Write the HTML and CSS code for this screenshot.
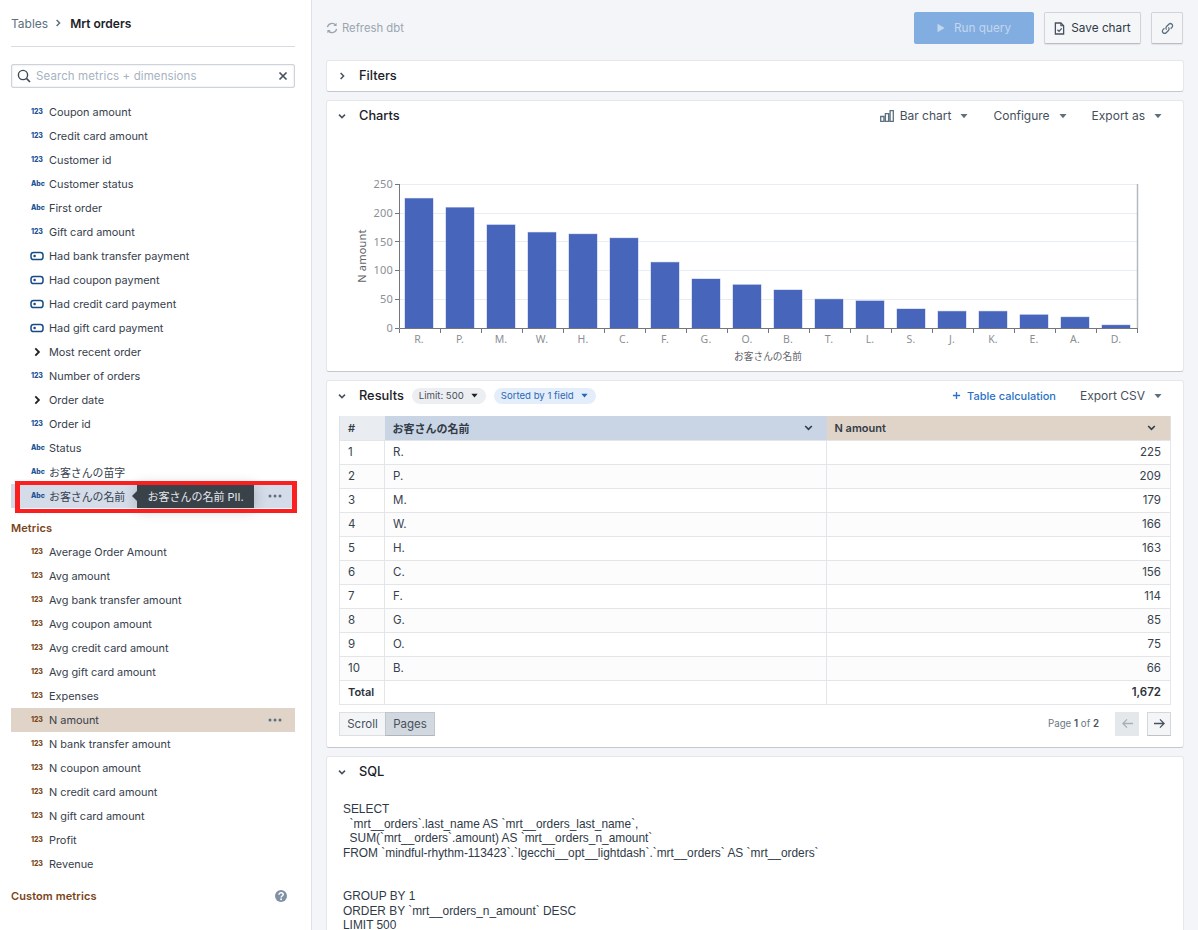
FILE: index.html
```html
<!DOCTYPE html>
<html lang="en">
<head>
<meta charset="utf-8">
<title>Mrt orders</title>
<link rel="stylesheet" href="styles.css">
</head>
<body>
<svg class="defs" width="0" height="0" aria-hidden="true">
  <symbol id="bool" viewBox="0 0 14 10"><rect x="1" y="1.500" width="12" height="7" rx="2.600" fill="none" stroke="currentColor" stroke-width="1.500"/><circle cx="4.600" cy="5" r="1.300" fill="currentColor"/></symbol>
  <symbol id="more" viewBox="0 0 14 4"><circle cx="2" cy="2" r="1.500" fill="currentColor"/><circle cx="7" cy="2" r="1.500" fill="currentColor"/><circle cx="12" cy="2" r="1.500" fill="currentColor"/></symbol>
  <symbol id="chev-d" viewBox="0 0 10 10"><path d="M2 3.600 5 6.600 8 3.600" fill="none" stroke="currentColor" stroke-width="1.500"/></symbol>
  <symbol id="chev-r" viewBox="0 0 10 10"><path d="M3.600 2 6.600 5 3.600 8" fill="none" stroke="currentColor" stroke-width="1.500"/></symbol>
  <symbol id="caret" viewBox="0 0 10 10"><path d="M1.500 3h7L5 7.200z" fill="currentColor"/></symbol>
</svg>

<div class="app">
  <aside class="sidebar">
    <div class="crumbs">
      <span class="crumb-link">Tables</span>
      <svg class="crumb-sep"><use href="#chev-r"/></svg>
      <span class="crumb-current">Mrt orders</span>
    </div>
    <div class="search">
      <svg class="search-icon" viewBox="0 0 14 14"><circle cx="6" cy="6" r="4.600" fill="none" stroke="currentColor" stroke-width="1.400"/><path d="M9.400 9.400 13 13" stroke="currentColor" stroke-width="1.600" fill="none"/></svg>
      <span class="search-text">Search metrics + dimensions</span>
      <svg class="search-clear" viewBox="0 0 10 10"><path d="M1.500 1.500 8.500 8.500M8.500 1.500 1.500 8.500" stroke="currentColor" stroke-width="1.700" fill="none"/></svg>
    </div>

    <ul class="fields dims">
      <li class="field"><span class="ftype">123</span>Coupon amount</li>
      <li class="field"><span class="ftype">123</span>Credit card amount</li>
      <li class="field"><span class="ftype">123</span>Customer id</li>
      <li class="field"><span class="ftype">Abc</span>Customer status</li>
      <li class="field"><span class="ftype">Abc</span>First order</li>
      <li class="field"><span class="ftype">123</span>Gift card amount</li>
      <li class="field"><svg class="fbool"><use href="#bool"/></svg>Had bank transfer payment</li>
      <li class="field"><svg class="fbool"><use href="#bool"/></svg>Had coupon payment</li>
      <li class="field"><svg class="fbool"><use href="#bool"/></svg>Had credit card payment</li>
      <li class="field"><svg class="fbool"><use href="#bool"/></svg>Had gift card payment</li>
      <li class="field"><svg class="ftree"><use href="#chev-r"/></svg>Most recent order</li>
      <li class="field"><span class="ftype">123</span>Number of orders</li>
      <li class="field"><svg class="ftree"><use href="#chev-r"/></svg>Order date</li>
      <li class="field"><span class="ftype">123</span>Order id</li>
      <li class="field"><span class="ftype">Abc</span>Status</li>
      <li class="field"><span class="ftype">Abc</span>お客さんの苗字</li>
      <li class="field hovered"><span class="ftype">Abc</span>お客さんの名前
        <svg class="more"><use href="#more"/></svg>
        <div class="tooltip">お客さんの名前 PII.</div>
        <div class="highlight"></div>
      </li>
    </ul>

    <h3 class="group">Metrics</h3>
    <ul class="fields metrics">
      <li class="field"><span class="ftype">123</span>Average Order Amount</li>
      <li class="field"><span class="ftype">123</span>Avg amount</li>
      <li class="field"><span class="ftype">123</span>Avg bank transfer amount</li>
      <li class="field"><span class="ftype">123</span>Avg coupon amount</li>
      <li class="field"><span class="ftype">123</span>Avg credit card amount</li>
      <li class="field"><span class="ftype">123</span>Avg gift card amount</li>
      <li class="field"><span class="ftype">123</span>Expenses</li>
      <li class="field selected"><span class="ftype">123</span>N amount<svg class="more"><use href="#more"/></svg></li>
      <li class="field"><span class="ftype">123</span>N bank transfer amount</li>
      <li class="field"><span class="ftype">123</span>N coupon amount</li>
      <li class="field"><span class="ftype">123</span>N credit card amount</li>
      <li class="field"><span class="ftype">123</span>N gift card amount</li>
      <li class="field"><span class="ftype">123</span>Profit</li>
      <li class="field"><span class="ftype">123</span>Revenue</li>
    </ul>
    <h3 class="group custom">Custom metrics
      <svg class="help" viewBox="0 0 12 12"><circle cx="6" cy="6" r="6" fill="currentColor"/><path d="M4 4.700C4 2 8.200 2.200 8.200 4.600 8.200 6 6.100 6 6.100 7.400" fill="none" stroke="#fff" stroke-width="1.500"/><circle cx="6.100" cy="9.300" r=".95" fill="#fff"/></svg>
    </h3>
  </aside>

  <main class="main">
    <div class="toolbar">
      <span class="refresh">
        <svg class="refresh-icon" viewBox="0 0 12 12"><path d="M1.400 5.200A4.700 4.700 0 0 1 9.600 3M10.600 6.800A4.700 4.700 0 0 1 2.400 9" fill="none" stroke="currentColor" stroke-width="1.300"/><path d="M10.600 .8v3.200H7.400zM1.400 11.200V8h3.200z" fill="currentColor"/></svg>
        Refresh dbt
      </span>
      <div class="actions">
        <button class="btn-run"><svg class="run-icon" viewBox="0 0 8 10"><path d="M.5 .8 7.600 5 .5 9.200z" fill="currentColor"/></svg>Run query</button>
        <button class="btn"><svg class="save-icon" viewBox="0 0 12 14"><path d="M1.500 1h6l3 3v9h-9z" fill="none" stroke="currentColor" stroke-width="1.400"/><path d="M7.500 1v3h3" fill="none" stroke="currentColor" stroke-width="1.200"/><path d="M3.800 8.400 5.500 10.200 8.400 6.800" fill="none" stroke="currentColor" stroke-width="1.300"/></svg>Save chart</button>
        <button class="btn btn-icon"><svg class="link-icon" viewBox="0 0 14 14"><path d="M6 8.200a2.400 2.400 0 0 1 0-3.400L8.400 2.400a2.400 2.400 0 0 1 3.400 3.400L10.400 7.200M8 5.800a2.400 2.400 0 0 1 0 3.400L5.600 11.600a2.400 2.400 0 0 1-3.400-3.400L3.600 6.800" fill="none" stroke="currentColor" stroke-width="1.400"/></svg></button>
      </div>
    </div>

    <section class="card card-filters">
      <header class="card-head">
        <svg class="toggle"><use href="#chev-r"/></svg>
        <h2>Filters</h2>
      </header>
    </section>

    <section class="card card-charts">
      <header class="card-head">
        <svg class="toggle"><use href="#chev-d"/></svg>
        <h2>Charts</h2>
        <div class="head-actions">
          <span class="menu"><svg class="bar-icon" viewBox="0 0 14 12"><path d="M.7 6.500h3.200v4.800H.7zM5.400 3.600h3.200v7.700H5.400zM10.100 .7h3.200v10.600h-3.200z" fill="none" stroke="currentColor" stroke-width="1.300"/></svg>Bar chart<svg class="caret"><use href="#caret"/></svg></span>
          <span class="menu">Configure<svg class="caret"><use href="#caret"/></svg></span>
          <span class="menu">Export as<svg class="caret"><use href="#caret"/></svg></span>
        </div>
      </header>
      <svg class="chart" viewBox="0 0 856 240" width="856" height="240">
        <g class="grid">
          <path d="M72 53.500H811M72 82.500H811M72 110.500H811M72 139.500H811M72 168.500H811"/>
          <path class="grid-end" d="M810.500 53V197"/>
        </g>
        <g class="bars">
          <rect x="78" y="67.400" width="28" height="129.600"/>
          <rect x="119" y="76.600" width="28" height="120.400"/>
          <rect x="160" y="93.900" width="28" height="103.100"/>
          <rect x="201" y="101.400" width="28" height="95.600"/>
          <rect x="242" y="103.100" width="28" height="93.900"/>
          <rect x="283" y="107.100" width="28" height="89.900"/>
          <rect x="324" y="131.300" width="28" height="65.700"/>
          <rect x="365" y="148" width="28" height="49"/>
          <rect x="406" y="153.800" width="28" height="43.200"/>
          <rect x="447" y="159" width="28" height="38"/>
          <rect x="488" y="168.200" width="28" height="28.800"/>
          <rect x="529" y="169.900" width="28" height="27.100"/>
          <rect x="570" y="178" width="28" height="19"/>
          <rect x="611" y="180.300" width="28" height="16.700"/>
          <rect x="652" y="180.300" width="28" height="16.700"/>
          <rect x="693" y="183.800" width="28" height="13.200"/>
          <rect x="734" y="186.100" width="28" height="10.900"/>
          <rect x="775" y="194.100" width="28" height="2.900"/>
        </g>
        <path class="axis" d="M72.500 53V197.500H811M68 53.500h4M68 82.500h4M68 110.500h4M68 139.500h4M68 168.500h4M68 197.500h4M72.500 198v4M113.500 198v4M154.500 198v4M195.500 198v4M236.500 198v4M277.500 198v4M318.500 198v4M359.500 198v4M400.500 198v4M441.500 198v4M482.500 198v4M523.500 198v4M564.500 198v4M605.500 198v4M646.500 198v4M687.500 198v4M728.500 198v4M769.500 198v4M810.500 198v4"/>
        <g class="ylabels">
          <text x="66" y="57">250</text>
          <text x="66" y="86">200</text>
          <text x="66" y="114.500">150</text>
          <text x="66" y="143">100</text>
          <text x="66" y="172">50</text>
          <text x="66" y="201">0</text>
        </g>
        <g class="xlabels">
          <text x="92" y="212">R.</text>
          <text x="133" y="212">P.</text>
          <text x="174" y="212">M.</text>
          <text x="215" y="212">W.</text>
          <text x="256" y="212">H.</text>
          <text x="297" y="212">C.</text>
          <text x="338" y="212">F.</text>
          <text x="379" y="212">G.</text>
          <text x="420" y="212">O.</text>
          <text x="461" y="212">B.</text>
          <text x="502" y="212">T.</text>
          <text x="543" y="212">L.</text>
          <text x="584" y="212">S.</text>
          <text x="625" y="212">J.</text>
          <text x="666" y="212">K.</text>
          <text x="707" y="212">E.</text>
          <text x="748" y="212">A.</text>
          <text x="789" y="212">D.</text>
        </g>
        <text class="xtitle" x="441" y="229">お客さんの名前</text>
        <text class="ytitle" transform="translate(39 125) rotate(-90)">N amount</text>
      </svg>
    </section>

    <section class="card card-results">
      <header class="card-head">
        <svg class="toggle"><use href="#chev-d"/></svg>
        <h2>Results</h2>
        <span class="tag">Limit: 500<svg class="tag-caret"><use href="#caret"/></svg></span>
        <span class="tag tag-blue">Sorted by 1 field<svg class="tag-caret"><use href="#caret"/></svg></span>
        <div class="head-actions">
          <span class="menu menu-blue"><svg class="plus" viewBox="0 0 10 10"><path d="M5 1v8M1 5h8" stroke="currentColor" stroke-width="1.500" fill="none"/></svg>Table calculation</span>
          <span class="menu">Export CSV<svg class="caret"><use href="#caret"/></svg></span>
        </div>
      </header>
      <div class="table-wrap">
        <table class="results">
          <thead>
            <tr>
              <th class="col-idx">#</th>
              <th class="col-dim"><span class="th-in">お客さんの名前<svg class="th-chev"><use href="#chev-d"/></svg></span></th>
              <th class="col-metric"><span class="th-in">N amount<svg class="th-chev"><use href="#chev-d"/></svg></span></th>
            </tr>
          </thead>
          <tbody>
            <tr><td>1</td><td>R.</td><td class="num">225</td></tr>
            <tr><td>2</td><td>P.</td><td class="num">209</td></tr>
            <tr><td>3</td><td>M.</td><td class="num">179</td></tr>
            <tr><td>4</td><td>W.</td><td class="num">166</td></tr>
            <tr><td>5</td><td>H.</td><td class="num">163</td></tr>
            <tr><td>6</td><td>C.</td><td class="num">156</td></tr>
            <tr><td>7</td><td>F.</td><td class="num">114</td></tr>
            <tr><td>8</td><td>G.</td><td class="num">85</td></tr>
            <tr><td>9</td><td>O.</td><td class="num">75</td></tr>
            <tr><td>10</td><td>B.</td><td class="num">66</td></tr>
          </tbody>
          <tfoot>
            <tr><td>Total</td><td></td><td class="num">1,672</td></tr>
          </tfoot>
        </table>
      </div>
      <div class="table-foot">
        <div class="segmented"><span class="seg">Scroll</span><span class="seg seg-on">Pages</span></div>
        <div class="pager">
          <span class="page-text">Page <b>1</b> of <b>2</b></span>
          <span class="page-btn disabled"><svg class="arrow" viewBox="0 0 14 12"><path d="M13 6H2M6.500 1.500 2 6l4.500 4.500" fill="none" stroke="currentColor" stroke-width="1.400"/></svg></span>
          <span class="page-btn"><svg class="arrow" viewBox="0 0 14 12"><path d="M1 6h11M7.500 1.500 12 6l-4.500 4.500" fill="none" stroke="currentColor" stroke-width="1.400"/></svg></span>
        </div>
      </div>
    </section>

    <section class="card card-sql">
      <header class="card-head">
        <svg class="toggle"><use href="#chev-d"/></svg>
        <h2>SQL</h2>
      </header>
      <pre class="sql">SELECT
  `mrt__orders`.last_name AS `mrt__orders_last_name`,
  SUM(`mrt__orders`.amount) AS `mrt__orders_n_amount`
FROM `mindful-rhythm-113423`.`lgecchi__opt__lightdash`.`mrt__orders` AS `mrt__orders`


GROUP BY 1
ORDER BY `mrt__orders_n_amount` DESC
LIMIT 500</pre>
    </section>
  </main>
</div>
</body>
</html>
```

FILE: styles.css
```css
* { box-sizing: border-box; }
html, body { margin: 0; height: 100%; overflow: hidden; }
body { font-family: Inter, "Noto Sans CJK JP", sans-serif; font-size: 11.5px; color: #2f3a47; background: #f4f5f8; }
.defs { position: absolute; }
.app { display: flex; height: 930px; overflow: hidden; }

.sidebar { width: 312px; flex: none; background: #fff; border-right: 1px solid #dfe2e7; padding: 0 16px 0 11px; }
.crumbs { height: 47px; border-bottom: 1px solid #d9dde2; display: flex; align-items: center; font-size: 12px; }
.crumb-link { color: #5c7080; }
.crumb-sep { width: 10px; height: 10px; margin: 0 7px 0 5px; color: #5c7080; }
.crumb-current { font-weight: 600; color: #1c2127; }

.search { margin-top: 17px; height: 24px; border: 1px solid #ccd3da; border-radius: 2px; display: flex; align-items: center; padding: 0 6px 0 5px; box-shadow: inset 0 0 2px rgba(16,22,26,.15); }
.search-icon { width: 14px; height: 14px; color: #3d4a57; flex: none; }
.search-text { margin-left: 5px; color: #a7b3bf; font-size: 11.5px; letter-spacing: .1px; flex: 1; }
.search-clear { width: 10px; height: 10px; color: #46525f; flex: none; }

.fields { list-style: none; margin: 0; padding: 0; }
.dims { margin-top: 12px; }
.field { height: 24px; display: flex; align-items: center; padding-left: 20px; position: relative; font-size: 10.900px; color: #37414d; white-space: nowrap; }
.ftype { width: 12px; margin-right: 6px; flex: none; color: #1d5494; font-size: 7px; font-weight: 800; letter-spacing: -.1px; line-height: 10px; white-space: nowrap; }
.fbool { width: 14px; height: 10px; margin: 0 5px 0 -1px; flex: none; color: #174a86; }
.ftree { width: 12px; height: 12px; margin-right: 6px; flex: none; color: #1c2127; }
.metrics .ftype { color: #7a4a21; }
.more { position: absolute; right: 13px; top: 10px; width: 14px; height: 4px; color: #5c7080; }
.hovered { background: #d3dce8; }
.selected { background: #e0d4c8; }
.tooltip { position: absolute; left: 126px; top: 0; height: 24px; width: 117px; background: #394149; color: #e4e8ec; font-size: 11px; display: flex; align-items: center; justify-content: center; box-shadow: 0 2px 14px rgba(16,22,26,.22); z-index: 2; }
.tooltip::before { content: ""; position: absolute; left: -5px; top: 7px; border-style: solid; border-width: 5px 5px 5px 0; border-color: transparent #394149 transparent transparent; }
.highlight { position: absolute; left: 4px; top: -3px; width: 282px; height: 32px; border-style: solid; border-color: #fb1f1f; border-width: 4px 5px; z-index: 3; }
.group { margin: 8px 0 0; height: 24px; display: flex; align-items: center; font-size: 11px; font-weight: 600; color: #7a4418; letter-spacing: .1px; }
.custom { justify-content: space-between; padding-right: 8px; }
.help { width: 12px; height: 12px; color: #8191a5; }

.main { flex: 1; padding: 12px 14px 0; min-width: 0; display: flex; flex-direction: column; gap: 8px; }
.toolbar { height: 40px; flex: none; display: flex; justify-content: space-between; padding: 0 1px 8px 0; align-items: center; }
.refresh { display: inline-flex; align-items: center; gap: 4px; color: #9aa5b0; font-size: 11.300px; }
.refresh-icon { width: 12px; height: 12px; }
.actions { display: flex; gap: 10px; }
.actions button { height: 32px; font: inherit; font-size: 11.800px; border-radius: 2px; display: flex; align-items: center; justify-content: center; padding: 0; }
.btn-run { width: 120px; background: #82ade0; border: 0; color: #c2d6ef; }
.run-icon { width: 8px; height: 10px; margin-right: 9px; }
.btn { width: 97px; background: #f5f6f8; border: 1px solid #d0d4d9; border-bottom-color: #b9bec4; color: #2f3a47; box-shadow: 0 1px 1px rgba(16,22,26,.08); }
.actions .btn-icon { width: 32px; }
.save-icon { width: 11px; height: 13px; margin-right: 6px; color: #46525f; }
.link-icon { width: 13px; height: 13px; color: #5c7080; }

.card { flex: none; background: #fff; border-radius: 3px; border: 1px solid #e5e7ea; border-bottom: 1px solid #c4c8cc; }
.card-filters { height: 32px; }
.card-charts { height: 272px; }
.card-results { height: 368px; }
.card-sql { height: 200px; border-bottom: 0; }
.card-head { height: 29px; display: flex; align-items: center; padding: 0 20px 0 10px; }
.card-head h2 { margin: 0 0 0 12px; font-size: 12.800px; font-weight: 500; color: #1c2127; }
.toggle { width: 10px; height: 10px; flex: none; color: #46525f; }
.head-actions { margin-left: auto; display: flex; align-items: center; gap: 24px; }
.menu { display: inline-flex; align-items: center; font-size: 12px; color: #46505c; }
.menu-blue { color: #2a72c4; font-weight: 500; font-size: 11px; }
.caret { width: 10px; height: 10px; margin-left: 8px; color: #5c7080; }
.bar-icon { width: 14px; height: 12px; margin-right: 6px; color: #5c7080; }
.plus { width: 9px; height: 9px; margin-right: 6px; }
.chart { display: block; margin-top: 1px; }
.grid path { stroke: #e8edf4; fill: none; }
.grid .grid-end { stroke: #b4b8bc; stroke-width: 1.500; }
.bars rect { fill: #4765ba; stroke: #b7c4e8; stroke-width: 1; paint-order: stroke; }
.axis { stroke: #73767b; fill: none; }
.chart text { font-family: "Noto Sans", "Noto Sans CJK JP", sans-serif; font-size: 11px; letter-spacing: .2px; fill: #8b8f94; }
.ylabels text { text-anchor: end; }
.xlabels text { text-anchor: middle; font-size: 10.500px; }
.chart .xtitle { text-anchor: middle; fill: #5f6368; font-size: 9.700px; letter-spacing: 0; }
.chart .ytitle { text-anchor: middle; fill: #5f6368; font-size: 11px; }

.tag { margin-left: 8px; height: 16px; padding: 0 7px; background: #eceef1; border-radius: 8px; display: inline-flex; align-items: center; font-size: 9.600px; color: #46505c; }
.tag-blue { background: #e4eefa; color: #2a68b4; }
.tag-caret { width: 9px; height: 9px; margin-left: 6px; color: #1c2127; }
.tag-blue .tag-caret { color: #2a68b4; }
.table-wrap { padding: 6px 12px 0; }
.results { width: 832px; border-collapse: collapse; table-layout: fixed; font-size: 11.500px; color: #37414d; border-left: 1px solid #dde0e4; border-right: 1px solid #dde0e4; }
.results th { height: 24px; font-weight: 600; font-size: 11px; text-align: left; padding: 0 8px; color: #333c47; }
.results td { height: 24px; padding: 0 9px 0 8px; border: 1px solid #e3e5e8; }
.results tbody tr:nth-child(even) td { background: #fcfcfd; }
.col-idx { width: 45px; background: #e9ecf0; }
.col-dim { width: 442px; background: #c9d5e5; }
.col-metric { background: #e0d4c8; }
.th-in { display: flex; justify-content: space-between; align-items: center; padding-right: 5px; }
.th-chev { width: 11px; height: 11px; color: #333c47; }
.num { text-align: right; }
.results tfoot td { font-weight: 600; font-size: 11px; color: #2a323c; }
.results tfoot .num { font-size: 11.500px; }
.table-foot { display: flex; justify-content: space-between; align-items: center; padding: 7px 12px 0; }
.segmented { display: flex; height: 24px; }
.seg { width: 46px; display: flex; align-items: center; justify-content: center; background: #f4f5f7; border: 1px solid #dcdfe3; border-right: 0; color: #46505c; font-size: 11.500px; }
.seg-on { width: 50px; background: #d2d8e0; border: 1px solid #c2c7ce; border-bottom-color: #b0b5bc; }
.pager { display: flex; align-items: center; gap: 8px; }
.page-text { font-size: 9.700px; color: #6b7885; margin-right: 8px; }
.page-text b { color: #4a5561; font-weight: 600; }
.page-btn { width: 24px; height: 24px; display: flex; align-items: center; justify-content: center; background: #f4f5f7; border: 1px solid #d4d7db; border-bottom-color: #bec2c7; color: #46525f; }
.page-btn.disabled { background: #e5e8eb; border-color: #e5e8eb; color: #a5afb9; }
.arrow { width: 13px; height: 11px; }
.sql { margin: 16px 0 0 16px; font-family: "Liberation Sans", sans-serif; font-size: 11.900px; line-height: 14.500px; color: #2f3a47; }
```
